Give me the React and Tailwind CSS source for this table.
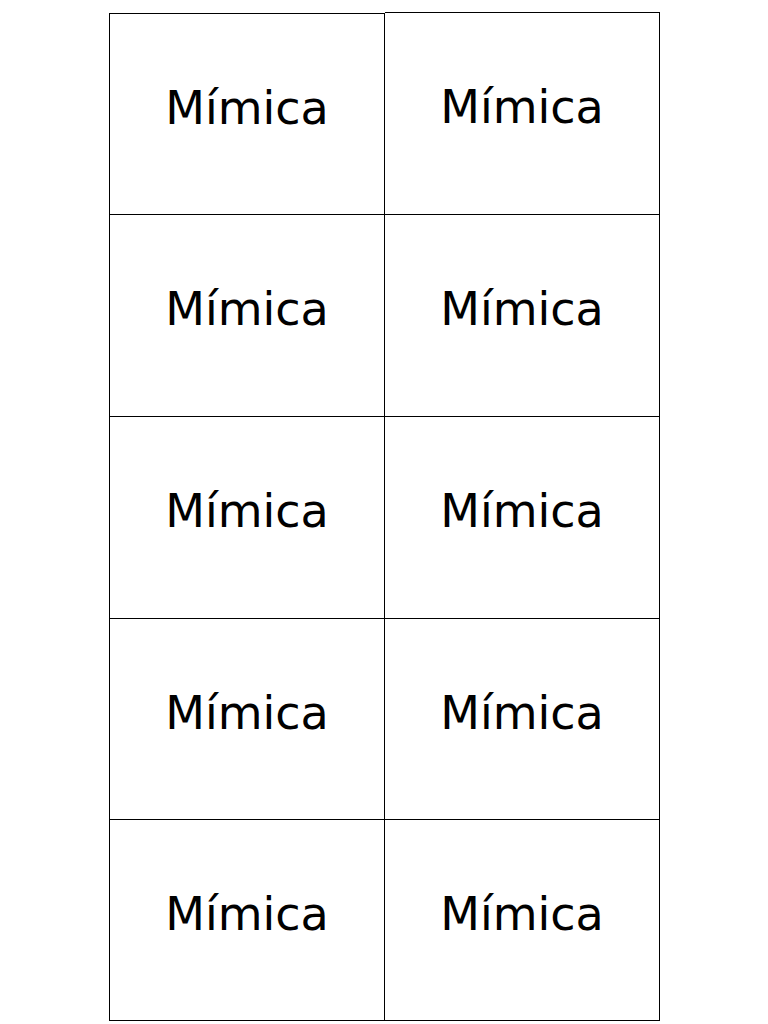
const rows = ["h-[201px]", "h-[202px]", "h-[202px]", "h-[201px]", "h-[201px]"];

function Cell({ h }) {
  return (
    <div className={`${h} border-r border-b border-black flex items-center justify-center pb-3`}>
      <span className="text-[46px] text-black" style={{ fontFamily: '"DejaVu Sans", sans-serif' }}>
        Mímica
      </span>
    </div>
  );
}

export default function App() {
  return (
    <div className="w-[768px] h-[1024px] bg-white overflow-hidden">
      <div className="flex pl-[109px] pt-[13px]">
        <div className="w-[276px] flex flex-col border-l border-t border-black">
          {rows.map((h, i) => (
            <Cell key={i} h={h} />
          ))}
        </div>
        <div className="w-[275px] -mt-px flex flex-col border-t border-black">
          {rows.map((h, i) => (
            <Cell key={i} h={i === 0 ? "h-[202px]" : h} />
          ))}
        </div>
      </div>
    </div>
  );
}
